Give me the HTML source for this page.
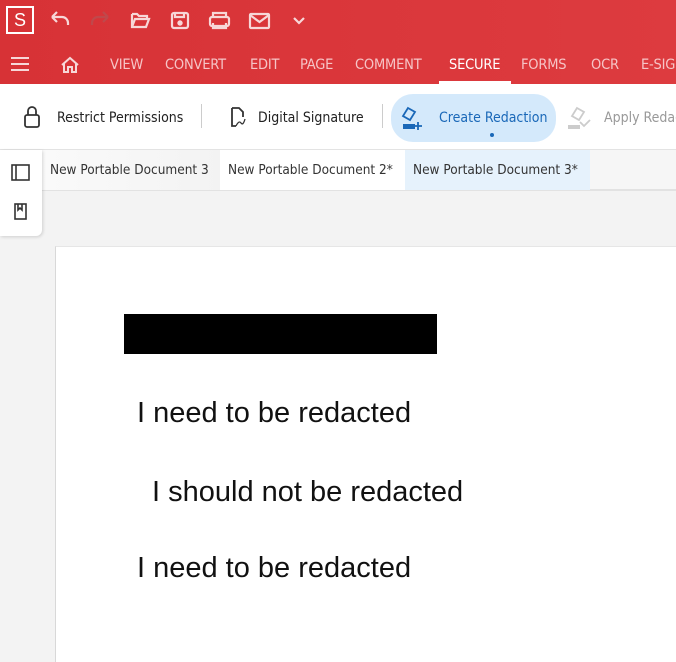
<!DOCTYPE html>
<html><head><style>
*{margin:0;padding:0;box-sizing:border-box}
body{width:676px;height:662px;overflow:hidden;background:#f3f3f3;font-family:"Liberation Sans",sans-serif;position:relative}
.top{position:absolute;left:0;top:0;width:676px;height:84px;background:linear-gradient(90deg,#d73236,#dd3b3f)}
.abs{position:absolute}
.nav{position:absolute;top:57px;font-size:14.5px;color:#f6c4c6;font-family:"DejaVu Sans Condensed","Liberation Sans",sans-serif;letter-spacing:-0.2px;white-space:nowrap}
.tb{position:absolute;left:0;top:84px;width:676px;height:66px;background:#fff;border-bottom:1px solid #e3e3e3}
.tl{position:absolute;top:110px;font-size:14px;color:#222;font-family:"DejaVu Sans Condensed","Liberation Sans",sans-serif;white-space:nowrap}
.tab{position:absolute;top:150px;height:40px;font-size:13.5px;color:#333;line-height:40px;padding-left:8px;font-family:"DejaVu Sans Condensed","Liberation Sans",sans-serif;white-space:nowrap}
.dt{position:absolute;font-size:29px;color:#111;white-space:nowrap}
</style></head><body>
<div class="top"></div>
<div class="abs" style="left:6px;top:6px;width:28px;height:28px;border:2px solid #fff;color:#fff;font-size:18px;text-align:center;line-height:24px">S</div>
<svg class="abs" style="left:48px;top:8px" width="300" height="26" fill="none" stroke="#f7d7d8" stroke-width="2.2">
<path d="M4 9 H14 a6 6 0 0 1 6 6 v2 M4 9 l5 -5 M4 9 l5 5"/>
<path d="M44 17 v-2 a6 6 0 0 1 6-6 h10 M60 9 l-5-5 M60 9 l-5 5" stroke="#c0484b"/>
<path d="M84 6 h5 l2 2 h8 v4 M84 6 v13 h14 l3-8 h-14 l-3 8"/>
<rect x="124" y="5" width="16" height="15" rx="2"/><circle cx="132" cy="15" r="1.6" fill="#f7d7d8"/><path d="M127 5 v4 h9 v-4"/>
<rect x="162" y="9" width="19" height="9" rx="2"/><path d="M165 9 v-4 h13 v4 M165 15 v5 h13 v-5"/>
<rect x="202" y="6" width="19" height="14" rx="1"/><path d="M202 7 l9.5 7 9.5-7"/>
<path d="M246 10 l5 5 5-5"/>
</svg>
<svg class="abs" style="left:10px;top:56px" width="80" height="18" stroke="#f7d7d8" stroke-width="2" fill="none">
<path d="M1 2 h18 M1 8 h18 M1 14 h18"/>
<path d="M52 9 l8-7 8 7 M54 7 v9 h4 v-5 h4 v5 h4 v-9"/>
</svg>
<div class="nav" style="left:110px">VIEW</div>
<div class="nav" style="left:165px">CONVERT</div>
<div class="nav" style="left:250px">EDIT</div>
<div class="nav" style="left:300px">PAGE</div>
<div class="nav" style="left:355px">COMMENT</div>
<div class="nav" style="left:449px;color:#fff">SECURE</div>
<div class="abs" style="left:439px;top:81px;width:72px;height:3px;background:#fff"></div>
<div class="nav" style="left:521px">FORMS</div>
<div class="nav" style="left:591px">OCR</div>
<div class="nav" style="left:641px">E-SIG</div>
<div class="tb"></div>
<div class="abs" style="left:391px;top:94px;width:165px;height:48px;border-radius:22px;background:#d4e9fb"></div>
<div class="abs" style="left:490px;top:133px;width:4px;height:4px;border-radius:2px;background:#1a68b8"></div>
<svg class="abs" style="left:20px;top:104px" width="580" height="30" fill="none" stroke="#333" stroke-width="1.8">
<rect x="5" y="11" width="14" height="12" rx="2"/><path d="M8 11 v-4 a4 4 0 0 1 8 0 v4"/>
<path d="M212 4 h7 l4 4 v5 M212 4 v18 h4"/><path d="M216 22 q3-6 5-3 q2 3 4-4" stroke-width="1.3"/>
<path d="M388 4 l7 4 -5 8 -7-4 z M383 12 l7 4" stroke="#1a68b8"/><rect x="383" y="20" width="12" height="5" fill="#1a68b8" stroke="none"/><path d="M398 18 v8 M394 22 h8" stroke="#1a68b8"/>
<path d="M557 4 l7 4 -5 8 -7-4 z M552 12 l7 4 M560 18 l4 4 6-6" stroke="#ccc"/><rect x="548" y="21" width="12" height="4" fill="#ccc" stroke="none"/>
</svg>
<div class="abs" style="left:201px;top:104px;width:1px;height:24px;background:#ccc"></div>
<div class="abs" style="left:382px;top:104px;width:1px;height:24px;background:#ccc"></div>
<div class="tl" style="left:57px">Restrict Permissions</div>
<div class="tl" style="left:258px">Digital Signature</div>
<div class="tl" style="left:439px;color:#1a68b8">Create Redaction</div>
<div class="tl" style="left:604px;color:#999">Apply Redaction</div>
<div class="abs" style="left:0;top:150px;width:676px;height:41px;background:#f6f6f6;border-bottom:2px solid #e2e2e2"></div>
<div class="tab" style="left:42px;width:178px;background:linear-gradient(90deg,#fafafa,#f3f3f3)">New Portable Document 3</div>
<div class="tab" style="left:220px;width:185px;background:#fff">New Portable Document 2*</div>
<div class="tab" style="left:405px;width:185px;background:#e6f2fc">New Portable Document 3*</div>
<div class="abs" style="left:0;top:150px;width:42px;height:86px;background:#fff;border-radius:0 0 6px 0;box-shadow:1px 1px 3px rgba(0,0,0,.15)"></div>
<svg class="abs" style="left:10px;top:162px" width="24" height="60" fill="none" stroke="#333" stroke-width="1.6">
<rect x="2" y="3" width="17" height="15"/><path d="M6 3 v15"/>
<rect x="5" y="42" width="11" height="15"/><path d="M8 42 v6 l2-2 2 2 v-6"/>
</svg>
<div class="abs" style="left:55px;top:246px;width:621px;height:416px;background:#fff;border-left:1px solid #d8d8d8;border-top:1px solid #e6e6e6"></div>
<div class="abs" style="left:124px;top:314px;width:313px;height:40px;background:#000"></div>
<div class="dt" style="left:137px;top:397px">I need to be redacted</div>
<div class="dt" style="left:152px;top:476px">I should not be redacted</div>
<div class="dt" style="left:137px;top:552px">I need to be redacted</div>
</body></html>
